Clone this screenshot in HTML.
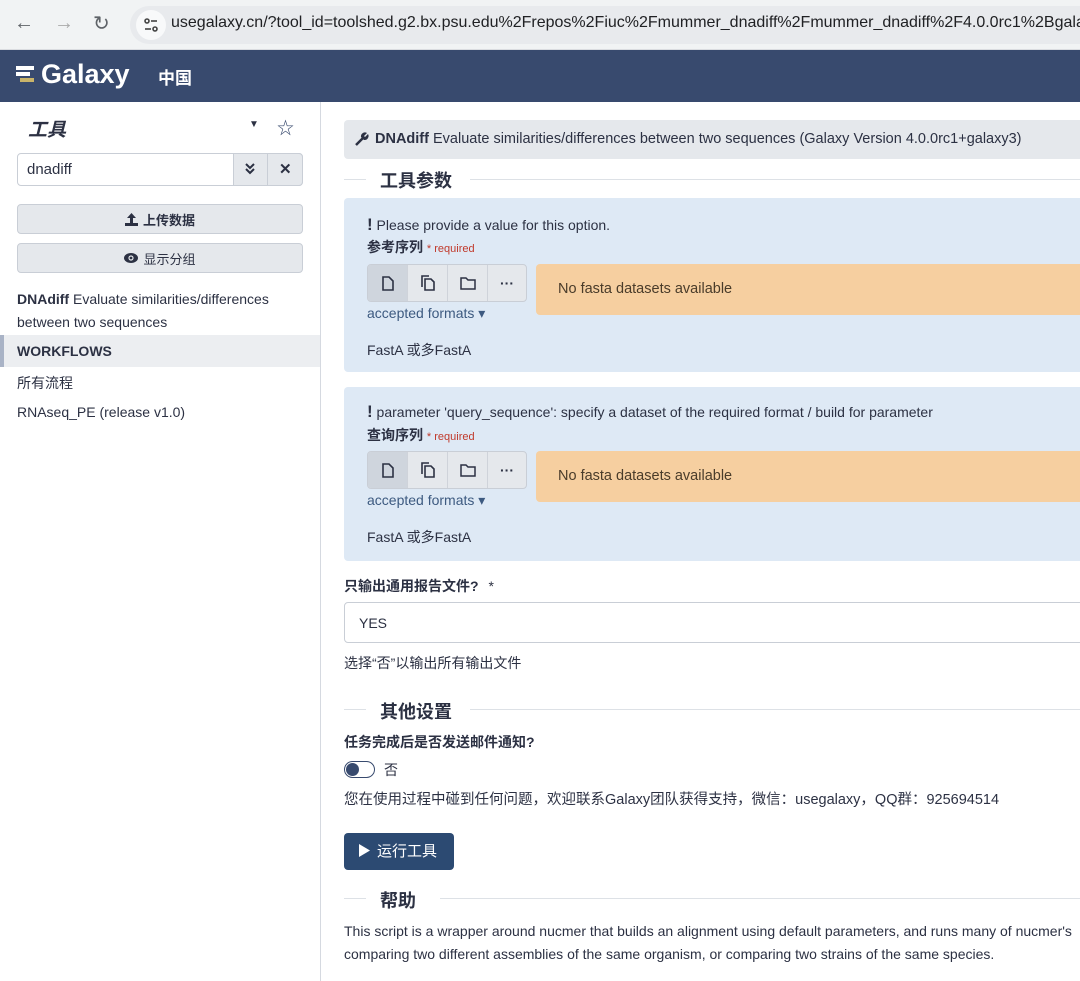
<!DOCTYPE html>
<html><head><meta charset="utf-8"><style>
*{box-sizing:border-box;margin:0;padding:0}
body{width:1080px;height:981px;overflow:hidden;font-family:"Liberation Sans","Noto Sans CJK SC",sans-serif;color:#2c3143;background:#fff;position:relative;font-size:14px}
.abs{position:absolute}
.bar{left:0;top:0;width:1080px;height:50px;background:#f1f3f4;border-bottom:1px solid #dadce0}
.url{left:130px;top:6px;width:980px;height:38px;background:#e8eaed;border-radius:19px}
.hdr{left:0;top:50px;width:1080px;height:52px;background:#384a6e}
.side{left:0;top:102px;width:321px;height:879px;border-right:1px solid #d5d9e0;background:#fff}
.btn{background:#e5e8ec;border:1px solid #c9ced6;border-radius:4px;text-align:center;font-size:13px;color:#2c3143;display:flex;align-items:center;justify-content:center;gap:5px}
.sec{font-size:18px;font-weight:bold;color:#2c3143}
.line{height:1px;background:#dde1e6}
.blue{background:#dee9f5;border-radius:4px}
.orange{background:#f6cfa0;border-radius:4px}
.grp{border:1px solid #c9ced6;border-radius:4px;background:#e5e8ec;display:flex;overflow:hidden}
.grp div{width:40px;height:36px;border-right:1px solid #cfd3da;display:flex;align-items:center;justify-content:center}
.grp div:first-child{background:#cfd5dd}
.grp div:last-child{border-right:none}
</style></head><body>
<div class="abs bar"></div>
<div class="abs" style="left:14px;top:12px;font-size:20px;color:#5f6368">←</div>
<div class="abs" style="left:54px;top:12px;font-size:20px;color:#aaa">→</div>
<div class="abs" style="left:93px;top:11px;font-size:20px;color:#5f6368">↻</div>
<div class="abs url"></div>
<div class="abs" style="left:136px;top:10px;width:30px;height:30px;border-radius:15px;background:#f8f9fa"></div>
<svg class="abs" style="left:142px;top:16px" width="18" height="18" viewBox="0 0 18 18" fill="none" stroke="#444" stroke-width="1.6"><circle cx="5" cy="5" r="2"/><line x1="9" y1="5" x2="15" y2="5"/><circle cx="13" cy="13" r="2"/><line x1="3" y1="13" x2="9" y2="13"/></svg>
<div class="abs" style="left:171px;top:14px;font-size:16px;color:#202124;white-space:nowrap">usegalaxy.cn/?tool_id=toolshed.g2.bx.psu.edu%2Frepos%2Fiuc%2Fmummer_dnadiff%2Fmummer_dnadiff%2F4.0.0rc1%2Bgalaxy3</div>
<div class="abs hdr"></div>
<div class="abs" style="left:16px;top:66px;width:18px;height:4px;background:#fff"></div>
<div class="abs" style="left:16px;top:72px;width:14px;height:4px;background:#fff"></div>
<div class="abs" style="left:20px;top:78px;width:14px;height:4px;background:#c9b46a"></div>
<div class="abs" style="left:41px;top:59px;font-size:27px;font-weight:bold;color:#fff">Galaxy</div>
<div class="abs" style="left:158px;top:64px;font-size:17px;font-weight:bold;color:#fff">中国</div>

<div class="abs side"></div>
<div class="abs" style="left:28px;top:115px;font-size:19px;font-style:italic;font-weight:bold">工具</div>
<div class="abs" style="left:249px;top:119px;font-size:10px">▼</div>
<div class="abs" style="left:277px;top:114px;font-size:17px;color:#384a6e">☆</div>
<div class="abs" style="left:17px;top:153px;width:286px;height:33px;border:1px solid #c9ced6;border-radius:4px;background:#fff"></div>
<div class="abs" style="left:27px;top:161px;font-size:15px">dnadiff</div>
<div class="abs" style="left:233px;top:153px;width:70px;height:33px;border:1px solid #c9ced6;border-radius:0 4px 4px 0;background:#e5e8ec"></div>
<div class="abs" style="left:267px;top:153px;width:1px;height:33px;background:#c9ced6"></div>
<svg class="abs" style="left:245px;top:163px" width="10" height="12" viewBox="0 0 10 12" fill="none" stroke="#2c3143" stroke-width="2"><path d="M1 1l4 4 4-4M1 6l4 4 4-4"/></svg>
<div class="abs" style="left:279px;top:160px;font-size:15px;font-weight:bold">✕</div>
<div class="abs btn" style="left:17px;top:204px;width:286px;height:30px;font-weight:bold"><svg width="13" height="13" viewBox="0 0 13 13" fill="#2c3143"><path d="M6.5 0L11 5H8v5H5V5H2z"/><rect x="0" y="10" width="13" height="3"/></svg>上传数据</div>
<div class="abs btn" style="left:17px;top:243px;width:286px;height:30px"><svg width="14" height="10" viewBox="0 0 14 10"><ellipse cx="7" cy="5" rx="7" ry="5" fill="#2c3143"/><circle cx="7" cy="5" r="2.6" fill="#e5e8ec"/><circle cx="7" cy="5" r="1.4" fill="#2c3143"/></svg>显示分组</div>
<div class="abs" style="left:17px;top:288px;font-size:14px;line-height:23px;width:290px"><b>DNAdiff</b> Evaluate similarities/differences between two sequences</div>
<div class="abs" style="left:0;top:335px;width:320px;height:32px;background:#eceef1"></div>
<div class="abs" style="left:0;top:335px;width:4px;height:32px;background:#a9b3c6"></div>
<div class="abs" style="left:17px;top:343px;font-weight:bold;font-size:14px">WORKFLOWS</div>
<div class="abs" style="left:17px;top:373px;font-size:14px">所有流程</div>
<div class="abs" style="left:17px;top:404px;font-size:14px">RNAseq_PE (release v1.0)</div>

<div class="abs" style="left:344px;top:120px;width:740px;height:39px;background:#e5e8ec;border-radius:4px"></div>
<svg class="abs" style="left:355px;top:132px" width="14" height="14" viewBox="0 0 14 14"><path d="M1 13L8 6" stroke="#2c3143" stroke-width="2.5"/><path d="M6 5a4 4 0 0 1 6-4l-3 3 1 1 3-3a4 4 0 0 1-4 6z" fill="#2c3143"/></svg>
<div class="abs" style="left:375px;top:131px;font-size:14.5px;white-space:nowrap"><b>DNAdiff</b> Evaluate similarities/differences between two sequences (Galaxy Version 4.0.0rc1+galaxy3)</div>
<div class="abs line" style="left:344px;top:179px;width:22px"></div>
<div class="abs sec" style="left:380px;top:167px">工具参数</div>
<div class="abs line" style="left:470px;top:179px;width:610px"></div>

<div class="abs blue" style="left:344px;top:198px;width:740px;height:174px"></div>
<div class="abs" style="left:367px;top:215px;font-size:14px"><b style="font-size:17px">!</b> Please provide a value for this option.</div>
<div class="abs" style="left:367px;top:237px;font-size:14px;font-weight:bold">参考序列 <span style="color:#c0392b;font-size:11px;font-weight:normal">* required</span></div>
<div class="abs grp" style="left:367px;top:264px;width:160px;height:38px"><div><svg width="12" height="15" viewBox="0 0 12 15" fill="none" stroke="#2c3143" stroke-width="1.6"><path d="M1 1h6l4 4v9H1z"/></svg></div><div><svg width="14" height="16" viewBox="0 0 14 16" fill="none" stroke="#2c3143" stroke-width="1.6"><path d="M4 4h6l3 3v8H4z"/><path d="M1 12V1h7"/></svg></div><div><svg width="16" height="13" viewBox="0 0 16 13" fill="none" stroke="#2c3143" stroke-width="1.5"><path d="M1 1h5l2 2h7v9H1z"/></svg></div><div style="width:38px;font-weight:bold">···</div></div>
<div class="abs" style="left:367px;top:305px;font-size:14px;color:#3d5a80">accepted formats ▾</div>
<div class="abs" style="left:367px;top:340px;font-size:14px">FastA 或多FastA</div>
<div class="abs orange" style="left:536px;top:264px;width:550px;height:51px"></div>
<div class="abs" style="left:558px;top:281px;font-size:14.5px;color:#4a3c2a">No fasta datasets available</div>

<div class="abs blue" style="left:344px;top:387px;width:740px;height:174px"></div>
<div class="abs" style="left:367px;top:402px;font-size:14px;white-space:nowrap"><b style="font-size:17px">!</b> parameter 'query_sequence': specify a dataset of the required format / build for parameter</div>
<div class="abs" style="left:367px;top:425px;font-size:14px;font-weight:bold">查询序列 <span style="color:#c0392b;font-size:11px;font-weight:normal">* required</span></div>
<div class="abs grp" style="left:367px;top:451px;width:160px;height:38px"><div><svg width="12" height="15" viewBox="0 0 12 15" fill="none" stroke="#2c3143" stroke-width="1.6"><path d="M1 1h6l4 4v9H1z"/></svg></div><div><svg width="14" height="16" viewBox="0 0 14 16" fill="none" stroke="#2c3143" stroke-width="1.6"><path d="M4 4h6l3 3v8H4z"/><path d="M1 12V1h7"/></svg></div><div><svg width="16" height="13" viewBox="0 0 16 13" fill="none" stroke="#2c3143" stroke-width="1.5"><path d="M1 1h5l2 2h7v9H1z"/></svg></div><div style="width:38px;font-weight:bold">···</div></div>
<div class="abs" style="left:367px;top:492px;font-size:14px;color:#3d5a80">accepted formats ▾</div>
<div class="abs" style="left:367px;top:527px;font-size:14px">FastA 或多FastA</div>
<div class="abs orange" style="left:536px;top:451px;width:550px;height:51px"></div>
<div class="abs" style="left:558px;top:468px;font-size:14.5px;color:#4a3c2a">No fasta datasets available</div>

<div class="abs" style="left:344px;top:576px;font-size:14px;font-weight:bold">只输出通用报告文件? <span style="font-weight:normal;margin-left:6px">*</span></div>
<div class="abs" style="left:344px;top:602px;width:745px;height:41px;border:1px solid #c9ced6;border-radius:4px"></div>
<div class="abs" style="left:359px;top:615px;font-size:14px">YES</div>
<div class="abs" style="left:344px;top:653px;font-size:14px">选择“否”以输出所有输出文件</div>

<div class="abs line" style="left:344px;top:709px;width:22px"></div>
<div class="abs sec" style="left:380px;top:698px">其他设置</div>
<div class="abs line" style="left:470px;top:709px;width:610px"></div>
<div class="abs" style="left:344px;top:732px;font-size:14px;font-weight:bold">任务完成后是否发送邮件通知?</div>
<div class="abs" style="left:344px;top:761px;width:31px;height:17px;border:1px solid #384a6e;border-radius:9px"></div>
<div class="abs" style="left:346px;top:763px;width:13px;height:13px;border-radius:7px;background:#384a6e"></div>
<div class="abs" style="left:384px;top:760px;font-size:14px">否</div>
<div class="abs" style="left:344px;top:788px;font-size:14.5px;white-space:nowrap">您在使用过程中碰到任何问题，欢迎联系Galaxy团队获得支持，微信：usegalaxy，QQ群：925694514</div>
<div class="abs" style="left:344px;top:833px;width:110px;height:37px;background:#2c4a72;border-radius:4px;color:#fff;font-size:15px;line-height:37px;padding-left:14px"><svg width="13" height="15" viewBox="0 0 13 15" style="vertical-align:-2px;margin-right:6px"><path d="M1 1l11 6.5L1 14z" fill="#fff"/></svg>运行工具</div>
<div class="abs line" style="left:344px;top:898px;width:22px"></div>
<div class="abs sec" style="left:380px;top:887px">帮助</div>
<div class="abs line" style="left:440px;top:898px;width:640px"></div>
<div class="abs" style="left:344px;top:920px;font-size:14px;line-height:23px;white-space:nowrap">This script is a wrapper around nucmer that builds an alignment using default parameters, and runs many of nucmer's<br>comparing two different assemblies of the same organism, or comparing two strains of the same species.</div>
</body></html>
